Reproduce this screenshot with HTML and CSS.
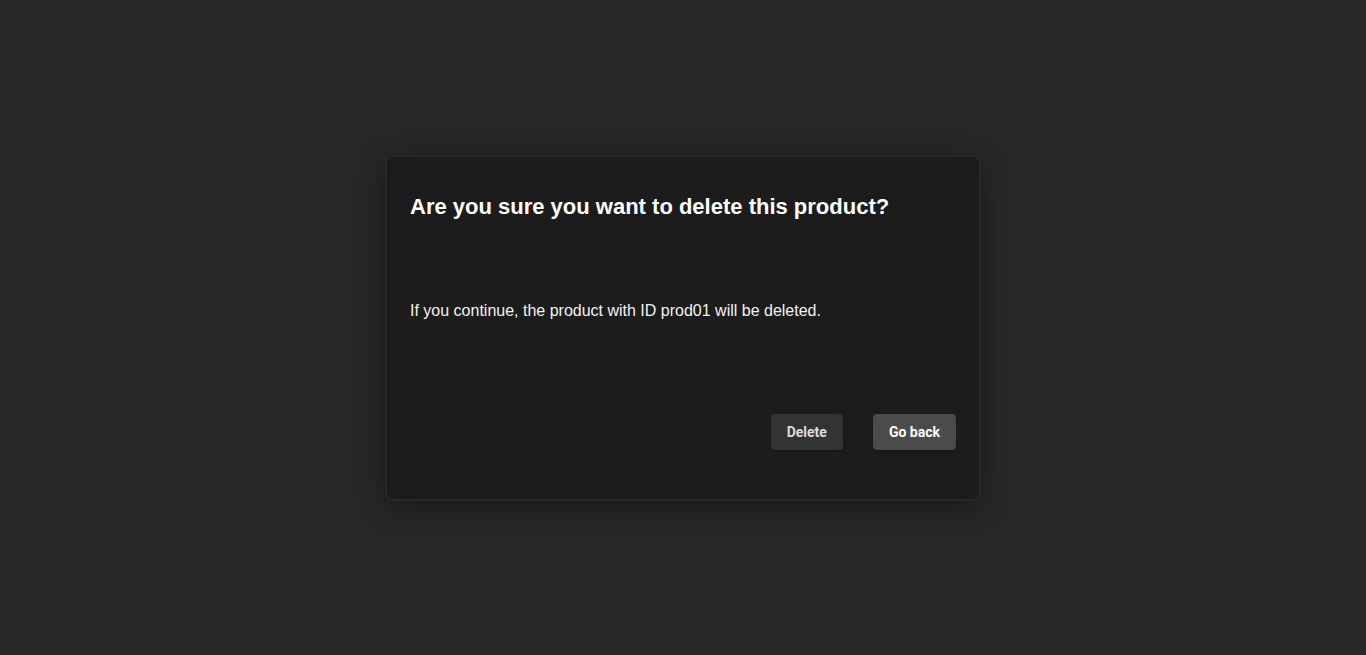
FILE: index.html
```html
<!DOCTYPE html>
<html lang="en">
<head>
<meta charset="utf-8">
<title>Delete product</title>
<link rel="stylesheet" href="styles.css">
</head>
<body>
<div class="backdrop">
  <div class="dialog" role="dialog">
    <h2 class="dialog-title">Are you sure you want to delete this product?</h2>
    <p class="dialog-text">If you continue, the product with ID prod01 will be deleted.</p>
    <div class="dialog-actions">
      <button class="btn btn-delete">Delete</button>
      <button class="btn btn-back">Go back</button>
    </div>
  </div>
</div>
</body>
</html>
```
FILE: styles.css
```css
html, body {
  margin: 0;
  padding: 0;
  height: 100%;
}
body {
  background: #282828;
  font-family: "Liberation Sans", Arial, sans-serif;
  color: #fff;
}
.backdrop {
  height: 100%;
  display: flex;
  align-items: center;
  justify-content: center;
}
.dialog {
  box-sizing: border-box;
  width: 596px;
  height: 346px;
  background: #1c1c1c;
  border: 2px solid #282828;
  border-radius: 8px;
  box-shadow: 0 6px 30px rgba(0, 0, 0, 0.4);
  padding: 24px 23px 24px 23px;
  display: flex;
  flex-direction: column;
}
.dialog-title {
  margin: 13px 0 0;
  font-size: 22px;
  font-weight: 700;
  line-height: 25px;
  color: #fff;
}
.dialog-text {
  margin: 83px 0 0;
  font-size: 16px;
  line-height: 18px;
  color: #f2f2f2;
}
.dialog-actions {
  margin-top: auto;
  margin-bottom: 25px;
  display: flex;
  justify-content: flex-end;
  gap: 30px;
}
.btn {
  font-family: Roboto, "Liberation Sans", sans-serif;
  font-weight: 700;
  font-size: 14px;
  height: 36px;
  padding: 0 16px;
  border: none;
  border-radius: 4px;
  box-shadow: 0 1px 2px rgba(0, 0, 0, 0.3);
  cursor: pointer;
}
.btn-delete {
  background: #333;
  color: #dcdcdc;
}
.btn-back {
  background: #4b4b4b;
  color: #fff;
}
```
